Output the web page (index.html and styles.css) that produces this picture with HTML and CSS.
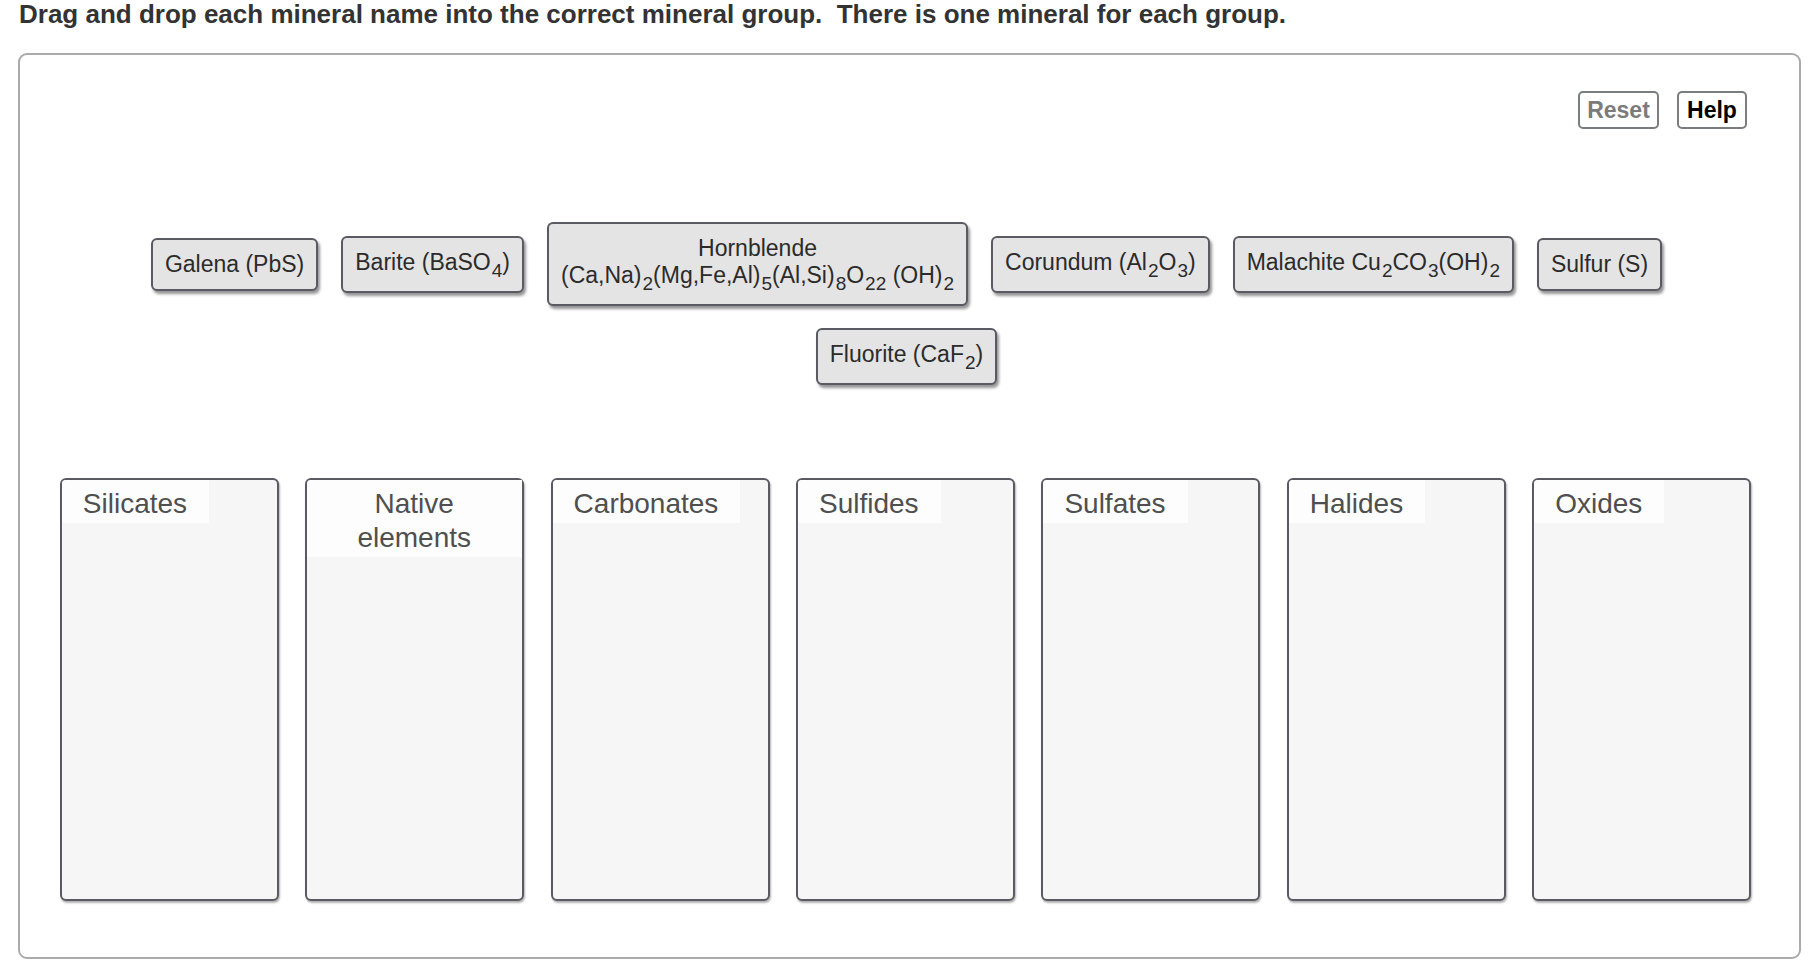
FILE: index.html
```html
<!DOCTYPE html>
<html lang="en">
<head>
<meta charset="utf-8">
<title>Mineral groups</title>
<link rel="stylesheet" href="styles.css">
</head>
<body>
<div class="page">
  <h1 class="prompt">Drag and drop each mineral name into the correct mineral group.&nbsp; There is one mineral for each group.</h1>
  <div class="panel">
    <div class="toolbar">
      <button class="btn btn-reset" type="button">Reset</button>
      <button class="btn btn-help" type="button">Help</button>
    </div>
    <div class="tiles">
      <div class="tile">Galena (PbS)</div>
      <div class="tile">Barite (BaSO<sub>4</sub>)</div>
      <div class="tile">Hornblende<br>(Ca,Na)<sub>2</sub>(Mg,Fe,Al)<sub>5</sub>(Al,Si)<sub>8</sub>O<sub>22</sub> (OH)<sub>2</sub></div>
      <div class="tile">Corundum (Al<sub>2</sub>O<sub>3</sub>)</div>
      <div class="tile">Malachite Cu<sub>2</sub>CO<sub>3</sub>(OH)<sub>2</sub></div>
      <div class="tile">Sulfur (S)</div>
      <div class="tile">Fluorite (CaF<sub>2</sub>)</div>
    </div>
    <div class="bins">
      <div class="bin"><div class="bin-label">Silicates</div></div>
      <div class="bin"><div class="bin-label">Native elements</div></div>
      <div class="bin"><div class="bin-label">Carbonates</div></div>
      <div class="bin"><div class="bin-label">Sulfides</div></div>
      <div class="bin"><div class="bin-label">Sulfates</div></div>
      <div class="bin"><div class="bin-label">Halides</div></div>
      <div class="bin"><div class="bin-label">Oxides</div></div>
    </div>
  </div>
</div>
</body>
</html>
```
FILE: styles.css
```css
* { box-sizing: border-box; }

html, body {
  margin: 0;
  padding: 0;
  background: #ffffff;
}

body {
  font-family: "Liberation Sans", Arial, Helvetica, sans-serif;
  color: #333333;
}

.page {
  padding: 0 15px 0 18px;
}

.prompt {
  margin: 0 0 25px 1px;
  font-size: 26px;
  line-height: 28px;
  font-weight: bold;
  color: #333333;
}

.panel {
  height: 906px;
  border: 2px solid #ababab;
  border-radius: 9px;
  background: #ffffff;
}

.toolbar {
  display: flex;
  justify-content: flex-end;
  gap: 18px;
  padding: 36px 52px 0 0;
}

.btn {
  height: 38px;
  padding: 0;
  border: 2px solid #7a7d80;
  border-radius: 5px;
  background: #ffffff;
  font-family: "Liberation Sans", Arial, Helvetica, sans-serif;
  font-size: 23px;
  font-weight: bold;
  line-height: 34px;
  text-align: center;
}

.btn-reset { width: 81px; color: #7b7b7b; }
.btn-help { width: 70px; color: #000000; }

.tiles {
  display: flex;
  flex-wrap: wrap;
  justify-content: center;
  align-items: center;
  gap: 22px 23px;
  margin-top: 93px;
  padding: 0 103px 0 97px;
}

.tile {
  padding: 11px 12px;
  border: 2px solid #5a5a63;
  border-radius: 6px;
  background: #e4e4e4;
  box-shadow: 2px 3px 3px rgba(0, 0, 0, 0.42);
  font-size: 23px;
  line-height: 27px;
  color: #2b2b2b;
  text-align: center;
  white-space: nowrap;
}

.tile sub {
  font-size: 19px;
  line-height: 19px;
  vertical-align: -7px;
  margin-left: 1px;
}

.bins {
  display: grid;
  grid-template-columns: repeat(7, 219px);
  justify-content: center;
  column-gap: 26.4px;
  margin-top: 93px;
  padding-right: 8px;
}

.bin {
  height: 423px;
  border: 2px solid #5a5a63;
  border-radius: 6px;
  background: #f6f6f6;
  box-shadow: 1px 2px 2px rgba(0, 0, 0, 0.3);
}

.bin-label {
  display: inline-block;
  max-width: 100%;
  padding: 7px 22px 2px 21px;
  background: #fdfdfd;
  font-size: 28px;
  line-height: 34px;
  color: #4f4f4f;
  text-align: center;
  border-top-left-radius: 4px;
}
```
